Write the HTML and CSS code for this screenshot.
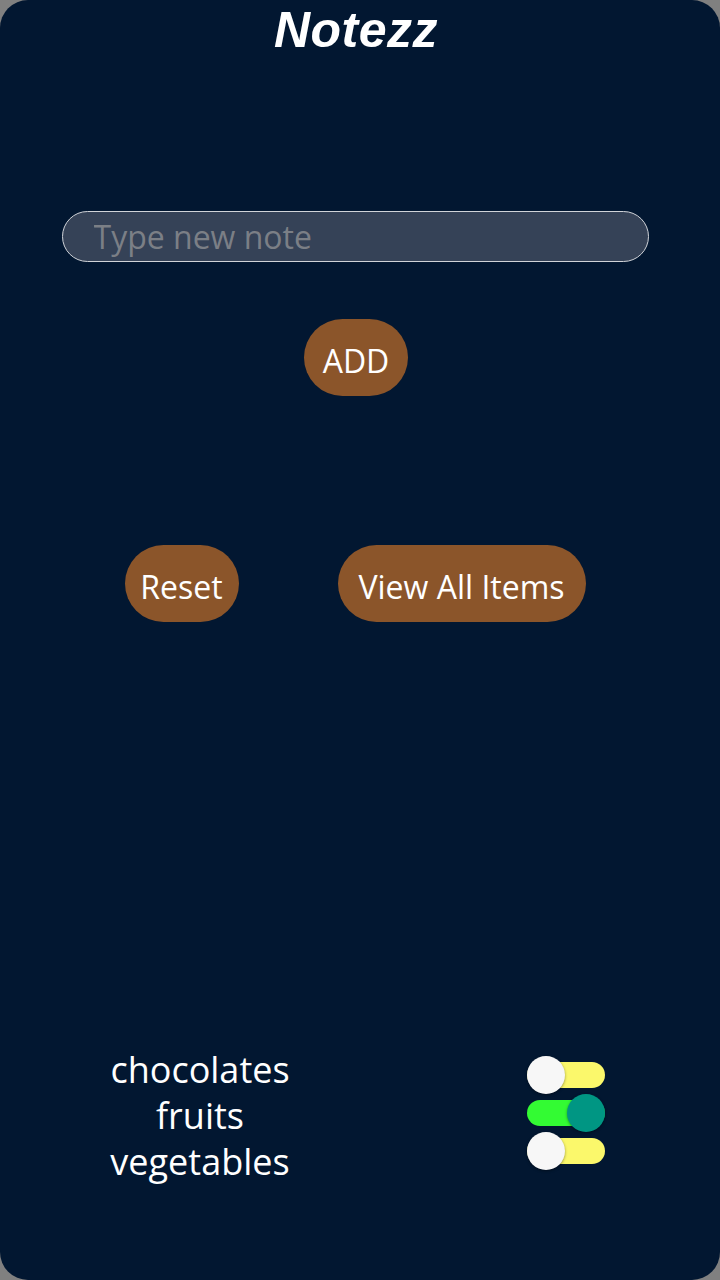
FILE: index.html
```html
<!DOCTYPE html>
<html lang="en">
<head>
<meta charset="utf-8">
<title>Notezz</title>
<link rel="stylesheet" href="styles.css">
</head>
<body>
<div class="app">
  <h1 class="title">Notezz</h1>
  <div class="input-wrap">
    <input class="note-input" type="text" placeholder="Type new note">
  </div>
  <div class="add-row">
    <button class="btn btn-add">ADD</button>
  </div>
  <div class="actions">
    <button class="btn btn-reset">Reset</button>
    <button class="btn btn-view">View All Items</button>
  </div>
  <div class="spacer"></div>
  <div class="list">
    <div class="labels">
      <div class="label">chocolates</div>
      <div class="label">fruits</div>
      <div class="label">vegetables</div>
    </div>
    <div class="switches">
      <div class="switch"><span class="track"></span><span class="thumb"></span></div>
      <div class="switch on"><span class="track"></span><span class="thumb"></span></div>
      <div class="switch"><span class="track"></span><span class="thumb"></span></div>
    </div>
  </div>
</div>
</body>
</html>
```

FILE: styles.css
```css
html, body {
  margin: 0;
  padding: 0;
  background: #808080;
}
body {
  font-family: "Open Sans", "Noto Sans", sans-serif;
}
.app {
  box-sizing: border-box;
  width: 720px;
  height: 1280px;
  padding-right: 8px;
  background: #021731;
  border-radius: 28px;
  display: flex;
  flex-direction: column;
  align-items: center;
  overflow: hidden;
}
.title {
  margin: 0;
  font-family: "Liberation Sans", sans-serif;
  font-weight: bold;
  font-style: italic;
  font-size: 50px;
  line-height: 60px;
  letter-spacing: 0.5px;
  color: #ffffff;
}
.input-wrap {
  margin-top: 151px;
  width: 587px;
  margin-left: -2px;
}
.note-input {
  box-sizing: border-box;
  width: 100%;
  height: 51px;
  border: 1.5px solid #d0d3d8;
  border-radius: 26px;
  background: #354257;
  padding: 0 0 0 31px;
  font-family: "Open Sans", sans-serif;
  font-size: 32px;
  color: #ffffff;
  outline: none;
}
.note-input::placeholder {
  color: #7b7f86;
}
.add-row {
  margin-top: 57px;
}
.btn {
  border: none;
  background: #8b552a;
  color: #ffffff;
  font-family: "Open Sans", sans-serif;
  font-size: 32px;
  height: 77px;
  border-radius: 39px;
  padding: 5px 0 0 0;
  cursor: pointer;
  white-space: nowrap;
}
.btn-add {
  width: 104px;
}
.actions {
  margin-top: 149px;
  display: flex;
  gap: 99px;
  margin-left: -2px;
}
.btn-reset {
  width: 114px;
}
.btn-view {
  width: 248px;
}
.spacer {
  flex: 1;
}
.list {
  align-self: stretch;
  display: flex;
  margin-bottom: 95px;
}
.labels {
  width: 400px;
  display: flex;
  flex-direction: column;
  align-items: center;
}
.label {
  font-size: 36px;
  line-height: 46px;
  color: #ffffff;
}
.switches {
  margin-left: 127px;
  margin-top: 9px;
  display: flex;
  flex-direction: column;
}
.switch {
  position: relative;
  width: 78px;
  height: 38px;
}
.track {
  position: absolute;
  left: 0;
  right: 0;
  top: 6px;
  height: 26px;
  border-radius: 13px;
  background: #fbf86b;
}
.thumb {
  position: absolute;
  left: 0;
  top: 0;
  width: 38px;
  height: 38px;
  border-radius: 50%;
  background: #f7f7f7;
  box-shadow: 0 1px 3px rgba(0, 0, 0, 0.4);
}
.switch.on .track {
  background: #33fb33;
}
.switch.on .thumb {
  left: auto;
  right: 0;
  background: #009683;
}
```
